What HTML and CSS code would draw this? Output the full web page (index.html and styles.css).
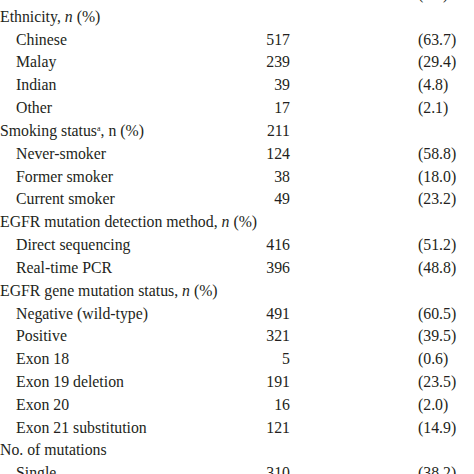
FILE: index.html
```html
<!DOCTYPE html>
<html>
<head>
<meta charset="utf-8">
<link rel="stylesheet" href="styles.css">
</head>
<body>
<div class="table">
  <div class="row"><span class="label"></span><span class="num"></span><span class="pct">(6.3)</span></div>
  <div class="row head"><span class="label">Ethnicity, <i>n</i> (%)</span></div>
  <div class="row"><span class="label sub">Chinese</span><span class="num">517</span><span class="pct">(63.7)</span></div>
  <div class="row"><span class="label sub">Malay</span><span class="num">239</span><span class="pct">(29.4)</span></div>
  <div class="row"><span class="label sub">Indian</span><span class="num">39</span><span class="pct">(4.8)</span></div>
  <div class="row"><span class="label sub">Other</span><span class="num">17</span><span class="pct">(2.1)</span></div>
  <div class="row"><span class="label">Smoking status<sup>a</sup>, n (%)</span><span class="num">211</span><span class="pct"></span></div>
  <div class="row"><span class="label sub">Never-smoker</span><span class="num">124</span><span class="pct">(58.8)</span></div>
  <div class="row"><span class="label sub">Former smoker</span><span class="num">38</span><span class="pct">(18.0)</span></div>
  <div class="row"><span class="label sub">Current smoker</span><span class="num">49</span><span class="pct">(23.2)</span></div>
  <div class="row head"><span class="label">EGFR mutation detection method, <i>n</i> (%)</span></div>
  <div class="row"><span class="label sub">Direct sequencing</span><span class="num">416</span><span class="pct">(51.2)</span></div>
  <div class="row"><span class="label sub">Real-time PCR</span><span class="num">396</span><span class="pct">(48.8)</span></div>
  <div class="row head"><span class="label">EGFR gene mutation status, <i>n</i> (%)</span></div>
  <div class="row"><span class="label sub">Negative (wild-type)</span><span class="num">491</span><span class="pct">(60.5)</span></div>
  <div class="row"><span class="label sub">Positive</span><span class="num">321</span><span class="pct">(39.5)</span></div>
  <div class="row"><span class="label sub">Exon 18</span><span class="num">5</span><span class="pct">(0.6)</span></div>
  <div class="row"><span class="label sub">Exon 19 deletion</span><span class="num">191</span><span class="pct">(23.5)</span></div>
  <div class="row"><span class="label sub">Exon 20</span><span class="num">16</span><span class="pct">(2.0)</span></div>
  <div class="row"><span class="label sub">Exon 21 substitution</span><span class="num">121</span><span class="pct">(14.9)</span></div>
  <div class="row head"><span class="label">No. of mutations</span></div>
  <div class="row"><span class="label sub">Single</span><span class="num">310</span><span class="pct">(38.2)</span></div>
</div>
</body>
</html>
```
FILE: styles.css
```css
html, body {
  margin: 0;
  padding: 0;
  background: #ffffff;
  overflow: hidden;
}
body {
  font-family: "Liberation Serif", "Times New Roman", serif;
  font-size: 15.8px;
  color: #231f20;
}
.table {
  margin-top: -17.1px;
}
.row {
  display: grid;
  grid-template-columns: 240px 50px 128px 1fr;
  height: 22.84px;
  line-height: 22.84px;
  white-space: nowrap;
}
.label {
  grid-column: 1;
}
.head .label {
  grid-column: 1 / 5;
}
.label.sub {
  padding-left: 16px;
}
.num {
  grid-column: 2;
  text-align: right;
}
.pct {
  grid-column: 4;
}
sup {
  font-size: 8px;
  line-height: 0;
  vertical-align: 5px;
}
```
